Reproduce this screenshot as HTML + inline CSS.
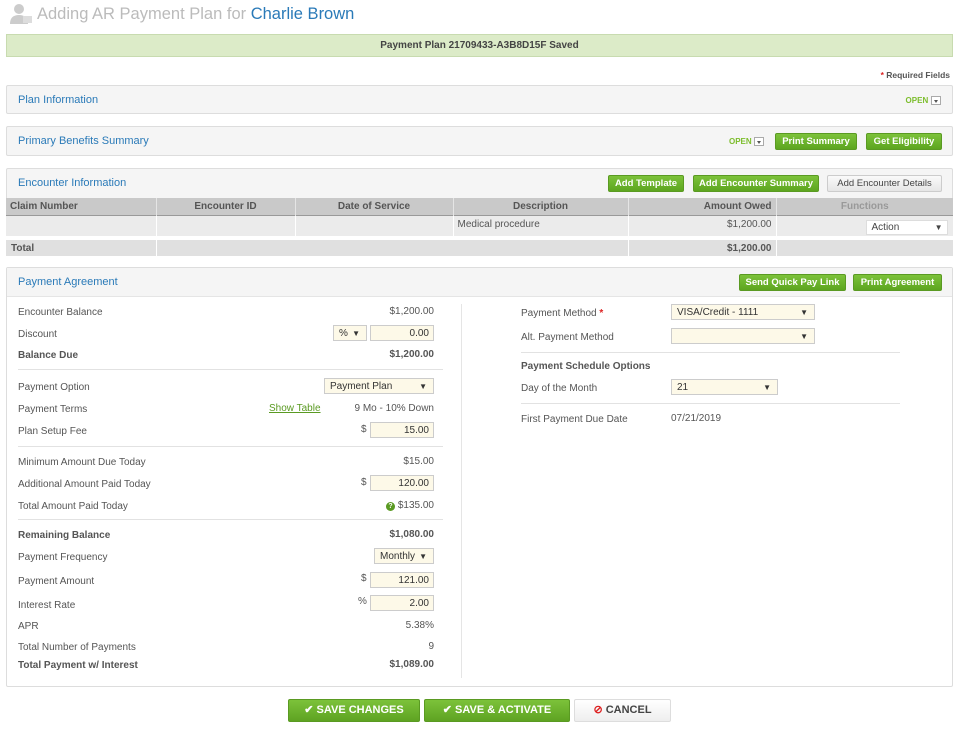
<!DOCTYPE html>
<html><head><meta charset="utf-8"><style>
*{box-sizing:border-box;margin:0;padding:0}
body{width:960px;height:729px;background:#fff;font-family:"Liberation Sans",sans-serif;font-size:10px;color:#555;position:relative;overflow:hidden}
.a{position:absolute;white-space:nowrap}
.panel{position:absolute;left:6px;width:947px;border:1px solid #ddd;background:#f5f5f5;border-radius:2px}
.ph{color:#2a7ab8;font-size:11px}
.gbtn{position:absolute;height:17px;background:linear-gradient(#7cc23a,#5da51f);border:1px solid #5a9a22;color:#fff;font-weight:bold;font-size:9.5px;line-height:15px;text-align:center;border-radius:2px}
.wbtn{position:absolute;height:17px;background:linear-gradient(#fafafa,#e6e6e6);border:1px solid #ccc;color:#444;font-size:9.5px;line-height:15px;text-align:center;border-radius:2px}
.open{color:#7cbd2c;font-weight:bold;font-size:8px}
.dd{display:inline-block;width:10px;height:9px;border:1px solid #aaa;background:#fff;vertical-align:middle;position:relative}
.dd:after{content:"";position:absolute;left:2px;top:3px;border:2px solid transparent;border-top:3px solid #555}
.inp{position:absolute;height:16px;background:#fdf9e8;border:1px solid #ccc;text-align:right;padding-right:4px;line-height:15px;color:#333}
.sel{position:absolute;height:16px;background:#fdf9e8;border:1px solid #ccc;line-height:15px;padding-left:5px;color:#333}
.sel:after{content:"▼";position:absolute;right:6px;font-size:8px}
.lbl{position:absolute;left:18px}
.val{position:absolute;right:526px;text-align:right}
.b{font-weight:bold;color:#555}
.hl{position:absolute;height:1px;background:#e2e2e2}
th,td{font-size:10px}
</style></head><body>
<svg class="a" style="left:9px;top:3px" width="24" height="22"><circle cx="10" cy="6" r="5" fill="#ccc"/><path d="M1 21 Q1 12 10 12 Q19 12 19 21Z" fill="#ccc"/><rect x="14" y="13" width="9" height="7" fill="#ddd"/></svg>
<div class="a" style="left:37px;top:5px;font-size:16.5px;color:#bbb">Adding AR Payment Plan for <span style="color:#2a7ab8">Charlie Brown</span></div>
<div class="a" style="left:6px;top:34px;width:947px;height:23px;background:#dcebc8;border:1px solid #c8dbb0;text-align:center;line-height:21px;font-weight:bold;color:#444;font-size:10px">Payment Plan 21709433-A3B8D15F Saved</div>
<div class="a" style="right:10px;top:70px;font-size:8.5px;font-weight:bold;color:#555"><span style="color:#d22">*</span> Required Fields</div>

<div class="panel" style="top:85px;height:29px"><div class="a ph" style="left:11px;top:8px">Plan Information</div><div class="a" style="right:11px;top:9px"><span class="open">OPEN</span> <span class="dd"></span></div></div>

<div class="panel" style="top:126px;height:30px"><div class="a ph" style="left:11px;top:8px">Primary Benefits Summary</div><div class="a" style="left:722px;top:9px"><span class="open">OPEN</span> <span class="dd"></span></div>
<div class="gbtn" style="left:768px;top:6px;width:82px">Print Summary</div><div class="gbtn" style="left:859px;top:6px;width:76px">Get Eligibility</div></div>

<div class="panel" style="top:168px;height:88px;background:#f5f5f5"><div class="a ph" style="left:11px;top:8px">Encounter Information</div>
<div class="gbtn" style="left:601px;top:6px;width:76px">Add Template</div><div class="gbtn" style="left:686px;top:6px;width:126px">Add Encounter Summary</div><div class="wbtn" style="left:820px;top:6px;width:115px">Add Encounter Details</div></div>
<table class="a" style="left:6px;top:198px;width:947px;border-collapse:collapse;table-layout:fixed">
<colgroup><col style="width:150px"><col style="width:139px"><col style="width:158px"><col style="width:175px"><col style="width:148px"><col></colgroup>
<tr style="background:#c9c9c9;height:17px;color:#555;font-weight:bold"><td style="padding-left:4px;border-right:1px solid #e5e5e5">Claim Number</td><td style="text-align:center;border-right:1px solid #e5e5e5">Encounter ID</td><td style="text-align:center;border-right:1px solid #e5e5e5">Date of Service</td><td style="text-align:center;border-right:1px solid #e5e5e5">Description</td><td style="text-align:right;padding-right:4px;border-right:1px solid #e5e5e5">Amount Owed</td><td style="text-align:center;color:#999">Functions</td></tr>
<tr style="background:#ebebeb;height:21px;vertical-align:top;border-top:1px solid #999"><td style="border-right:1px solid #fff"></td><td style="border-right:1px solid #fff"></td><td style="border-right:1px solid #fff"></td><td style="padding:3px 4px;border-right:1px solid #fff">Medical procedure</td><td style="text-align:right;padding:3px 4px;border-right:1px solid #fff">$1,200.00</td><td style="position:relative"><div style="position:absolute;left:89px;top:4px;width:82px;height:15px;background:#fff;border:1px solid #ddd;padding-left:5px;line-height:13px;color:#444">Action<span style="position:absolute;right:4px;font-size:8px">▼</span></div></td></tr>
<tr style="height:4px;background:#fff"><td colspan="6"></td></tr>
<tr style="background:#e0e0e0;height:16px;font-weight:bold"><td style="padding-left:5px;border-right:1px solid #fff">Total</td><td></td><td></td><td style="border-right:1px solid #fff"></td><td style="text-align:right;padding-right:4px;border-right:1px solid #fff">$1,200.00</td><td></td></tr>
</table>

<div class="panel" style="top:267px;height:420px;background:#fff"><div style="height:29px;background:#f5f5f5;border-bottom:1px solid #e5e5e5"></div><div class="a ph" style="left:11px;top:8px">Payment Agreement</div>
<div class="gbtn" style="left:732px;top:6px;width:107px">Send Quick Pay Link</div><div class="gbtn" style="left:846px;top:6px;width:89px">Print Agreement</div></div>
<div class="a" style="left:461px;top:304px;width:1px;height:374px;background:#e5e5e5"></div>

<div class="lbl" style="top:307px">Encounter Balance</div><div class="val" style="top:306px">$1,200.00</div>
<div class="lbl" style="top:329px">Discount</div><div class="sel" style="left:333px;top:325px;width:34px">%</div><div class="inp" style="left:370px;top:325px;width:64px">0.00</div>
<div class="lbl b" style="top:350px">Balance Due</div><div class="val b" style="top:349px">$1,200.00</div>
<div class="hl" style="left:18px;top:369px;width:425px"></div>
<div class="lbl" style="top:382px">Payment Option</div><div class="sel" style="left:324px;top:378px;width:110px">Payment Plan</div>
<div class="lbl" style="top:404px">Payment Terms</div><div class="a" style="left:269px;top:403px;color:#5a9a22;text-decoration:underline">Show Table</div><div class="val" style="top:403px">9 Mo - 10% Down</div>
<div class="lbl" style="top:426px">Plan Setup Fee</div><div class="a" style="left:361px;top:424px">$</div><div class="inp" style="left:370px;top:422px;width:64px">15.00</div>
<div class="hl" style="left:18px;top:446px;width:425px"></div>
<div class="lbl" style="top:457px">Minimum Amount Due Today</div><div class="val" style="top:456px">$15.00</div>
<div class="lbl" style="top:479px">Additional Amount Paid Today</div><div class="a" style="left:361px;top:477px">$</div><div class="inp" style="left:370px;top:475px;width:64px">120.00</div>
<div class="lbl" style="top:501px">Total Amount Paid Today</div><div class="val" style="top:500px"><span style="display:inline-block;width:9px;height:9px;border-radius:50%;background:#5a9a22;color:#fff;font-size:7px;line-height:9px;text-align:center;font-weight:bold">?</span> $135.00</div>
<div class="hl" style="left:18px;top:519px;width:425px"></div>
<div class="lbl b" style="top:530px">Remaining Balance</div><div class="val b" style="top:529px">$1,080.00</div>
<div class="lbl" style="top:552px">Payment Frequency</div><div class="sel" style="left:374px;top:548px;width:60px">Monthly</div>
<div class="lbl" style="top:576px">Payment Amount</div><div class="a" style="left:361px;top:573px">$</div><div class="inp" style="left:370px;top:572px;width:64px">121.00</div>
<div class="lbl" style="top:600px">Interest Rate</div><div class="a" style="left:358px;top:596px">%</div><div class="inp" style="left:370px;top:595px;width:64px">2.00</div>
<div class="lbl" style="top:621px">APR</div><div class="val" style="top:620px">5.38%</div>
<div class="lbl" style="top:642px">Total Number of Payments</div><div class="val" style="top:641px">9</div>
<div class="lbl b" style="top:660px">Total Payment w/ Interest</div><div class="val b" style="top:659px">$1,089.00</div>

<div class="a" style="left:521px;top:308px">Payment Method <span style="color:#d22;font-weight:bold">*</span></div><div class="sel" style="left:671px;top:304px;width:144px">VISA/Credit - 1111</div>
<div class="a" style="left:521px;top:332px">Alt. Payment Method</div><div class="sel" style="left:671px;top:328px;width:144px"></div>
<div class="hl" style="left:521px;top:352px;width:379px"></div>
<div class="a b" style="left:521px;top:361px">Payment Schedule Options</div>
<div class="a" style="left:521px;top:383px">Day of the Month</div><div class="sel" style="left:671px;top:379px;width:107px">21</div>
<div class="hl" style="left:521px;top:403px;width:379px"></div>
<div class="a" style="left:521px;top:414px">First Payment Due Date</div><div class="a" style="left:671px;top:413px">07/21/2019</div>

<div class="a" style="left:288px;top:699px;width:132px;height:23px;background:linear-gradient(#7cc23a,#5ea322);border:1px solid #5a9a22;border-radius:2px;color:#fff;font-weight:bold;font-size:11px;line-height:21px;text-align:center">✔ SAVE CHANGES</div>
<div class="a" style="left:424px;top:699px;width:146px;height:23px;background:linear-gradient(#7cc23a,#5ea322);border:1px solid #5a9a22;border-radius:2px;color:#fff;font-weight:bold;font-size:11px;line-height:21px;text-align:center">✔ SAVE &amp; ACTIVATE</div>
<div class="a" style="left:574px;top:699px;width:97px;height:23px;background:linear-gradient(#fff,#eee);border:1px solid #ddd;border-radius:2px;color:#444;font-weight:bold;font-size:11px;line-height:21px;text-align:center"><span style="color:#d22">⊘</span> CANCEL</div>
</body></html>
